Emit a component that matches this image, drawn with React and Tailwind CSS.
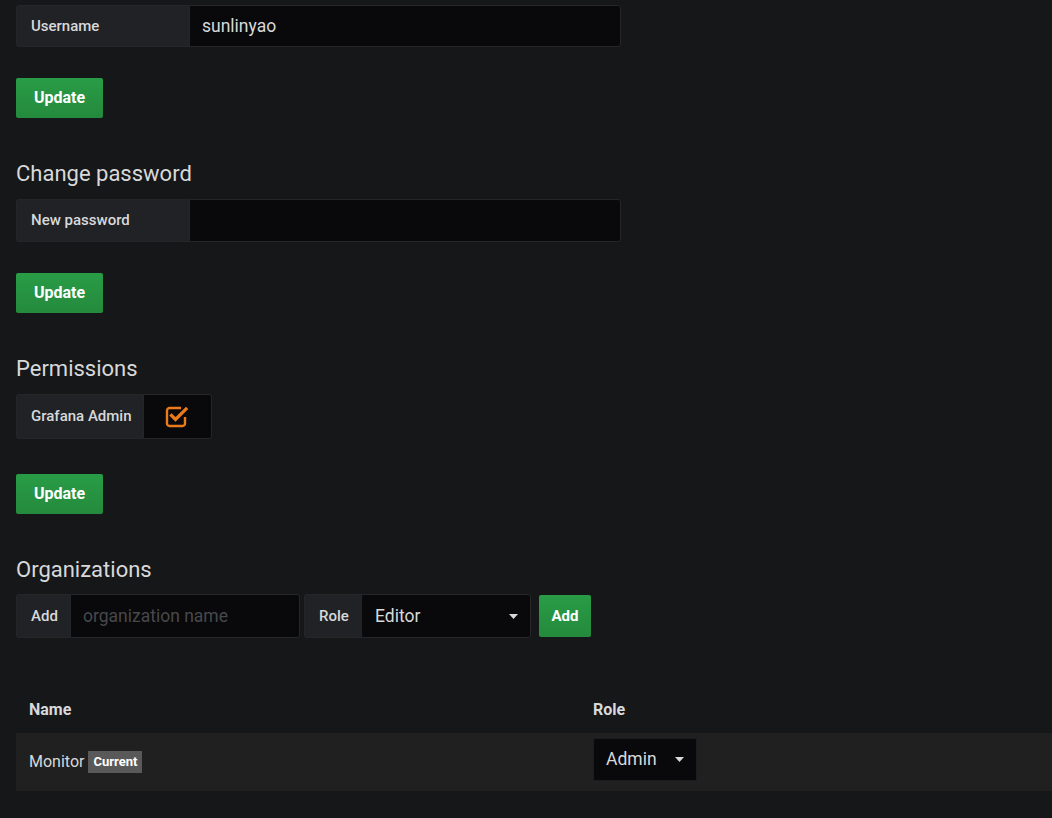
import React from "react";

const Caret = () => (
  <svg width="9" height="5" viewBox="0 0 9 5" className="shrink-0">
    <path d="M0 0h9L4.5 5z" fill="#d8d9da" />
  </svg>
);

const CheckSquare = () => (
  <svg width="26" height="24" viewBox="0 0 26 24">
    <path
      d="M17 3H5.5A2.5 2.5 0 0 0 3 5.5v13A2.5 2.5 0 0 0 5.5 21h13a2.5 2.5 0 0 0 2.5-2.5V12"
      fill="none"
      stroke="#eb7b18"
      strokeWidth="2.4"
    />
    <path
      d="M7.5 10.5l4 4L22 4"
      fill="none"
      stroke="#eb7b18"
      strokeWidth="3.2"
      strokeLinecap="square"
    />
  </svg>
);

const Label = ({ children, width }) => (
  <div
    className={`${width} h-full flex items-center pl-[14px] bg-[#202226] border border-[#262628] border-r-0 rounded-l-[3px] text-[15px] font-medium text-[#d8d9da] shrink-0`}
  >
    {children}
  </div>
);

const UpdateButton = ({ className = "" }) => (
  <button
    className={`w-[87px] h-[40px] rounded-[2px] bg-gradient-to-b from-[#299c46] to-[#248a3d] text-white text-[16px] font-bold ${className}`}
  >
    Update
  </button>
);

const Heading = ({ children }) => (
  <h3 className="mt-[43px] mb-[12px] h-[26px] leading-[26px] text-[22px] text-[#d8d9da]">
    {children}
  </h3>
);

export default function App() {
  return (
    <div
      className="min-h-[818px] bg-[#161719] overflow-hidden pt-[5px] pl-4"
      style={{ fontFamily: "Roboto, 'Liberation Sans', sans-serif" }}
    >
      <div className="flex w-[605px] h-[42px]">
        <Label width="w-[173px]">Username</Label>
        <div className="flex-1 flex items-center pl-[12px] bg-[#09090b] border border-[#262628] rounded-r-[3px] text-[17.5px] text-[#d8d9da]">
          sunlinyao
        </div>
      </div>
      <UpdateButton className="mt-[31px]" />

      <Heading>Change password</Heading>
      <div className="flex w-[605px] h-[43px]">
        <Label width="w-[173px]">New password</Label>
        <div className="flex-1 bg-[#09090b] border border-[#262628] rounded-r-[3px]" />
      </div>
      <UpdateButton className="mt-[31px]" />

      <Heading>Permissions</Heading>
      <div className="flex w-[196px] h-[45px]">
        <Label width="w-[127px]">Grafana Admin</Label>
        <div className="flex-1 flex items-center pl-[20px] bg-[#09090b] border border-[#262628] rounded-r-[3px]">
          <CheckSquare />
        </div>
      </div>
      <UpdateButton className="mt-[35px]" />

      <Heading>Organizations</Heading>
      <div className="flex items-center h-[44px] -mt-[1px]">
        <div className="flex h-full w-[284px]">
          <Label width="w-[54px]">Add</Label>
          <div className="flex-1 flex items-center pl-[12px] bg-[#09090b] border border-[#262628] rounded-r-[3px] text-[17.5px] text-[#48484b]">
            organization name
          </div>
        </div>
        <div className="flex h-full w-[227px] ml-[4px]">
          <Label width="w-[57px]">Role</Label>
          <div className="flex-1 flex items-center justify-between pl-[13px] pr-[12px] bg-[#09090b] border border-[#262628] rounded-r-[3px] text-[17.5px] text-[#d8d9da]">
            Editor
            <Caret />
          </div>
        </div>
        <button className="ml-[8px] w-[52px] h-[42px] rounded-[2px] bg-gradient-to-b from-[#299c46] to-[#248a3d] text-white text-[15px] font-bold">
          Add
        </button>
      </div>

      <div className="mt-[48px]">
        <div className="grid grid-cols-[564px_1fr] h-[47px] items-center text-[16px] font-bold text-[#d8d9da]">
          <div className="pl-[13px]">Name</div>
          <div className="pl-[13px]">Role</div>
        </div>
        <div className="grid grid-cols-[564px_1fr] h-[58px] items-center bg-[#202020] text-[#d8d9da]">
          <div className="pl-[13px] flex items-center gap-[4px]">
            <span className="text-[16px]">Monitor</span>
            <span className="bg-[#595959] text-white text-[13px] font-bold px-[5px] h-[22px] leading-[22px]">
              Current
            </span>
          </div>
          <div className="pl-[13px] self-start pt-[5px]">
            <div className="w-[104px] h-[43px] flex items-center justify-between pl-[12px] pr-[12px] bg-[#09090b] border border-[#1c1c1e] text-[17.5px] text-[#d8d9da]">
              Admin
              <Caret />
            </div>
          </div>
        </div>
      </div>
    </div>
  );
}
